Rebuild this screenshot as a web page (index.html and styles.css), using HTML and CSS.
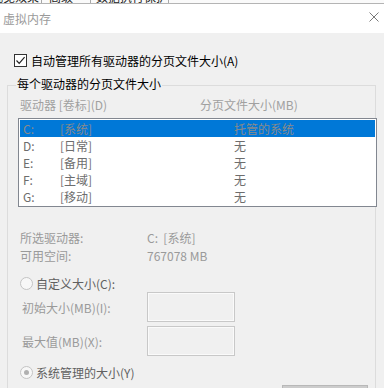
FILE: index.html
```html
<!DOCTYPE html>
<html lang="zh-CN">
<head>
<meta charset="utf-8">
<title>虚拟内存</title>
<link rel="stylesheet" href="styles.css">
</head>
<body>
<div class="strip">
  <div class="tab tab1"><span>视觉效果</span></div>
  <div class="tab tab2"><span>高级</span></div>
  <div class="tab tab3"><span>数据执行保护</span></div>
</div>
<div class="titlebar">
  <span class="title">虚拟内存</span>
  <svg class="close" width="10" height="10" viewBox="0 0 10 10"><path d="M0.5 0.5 L9.5 9.5 M9.5 0.5 L0.5 9.5" stroke="#7a7a7a" stroke-width="1" fill="none"/></svg>
</div>
<div class="content">
  <div class="checkrow">
    <span class="checkbox"><svg width="11" height="11" viewBox="0 0 11 11"><path d="M1.5 5.5 L4.2 8.3 L9.6 2.2" stroke="#222" stroke-width="1.2" fill="none"/></svg></span>
    <span class="label">自动管理所有驱动器的分页文件大小(A)</span>
  </div>
  <div class="group">
    <div class="legend">每个驱动器的分页文件大小</div>
    <div class="colheads">
      <span class="ch1">驱动器 [卷标](D)</span>
      <span class="ch2">分页文件大小(MB)</span>
    </div>
    <div class="list">
      <div class="row sel"><span class="c1">C:</span><span class="c2">[系统]</span><span class="c3">托管的系统</span></div>
      <div class="row"><span class="c1">D:</span><span class="c2">[日常]</span><span class="c3">无</span></div>
      <div class="row"><span class="c1">E:</span><span class="c2">[备用]</span><span class="c3">无</span></div>
      <div class="row"><span class="c1">F:</span><span class="c2">[主域]</span><span class="c3">无</span></div>
      <div class="row"><span class="c1">G:</span><span class="c2">[移动]</span><span class="c3">无</span></div>
    </div>
    <div class="info">
      <div class="irow"><span class="ilabel">所选驱动器:</span><span>C:&nbsp;&nbsp;[系统]</span></div>
      <div class="irow"><span class="ilabel">可用空间:</span><span>767078 MB</span></div>
    </div>
    <div class="radiorow first">
      <span class="radio"></span><span class="rlabel">自定义大小(C):</span>
    </div>
    <div class="boxrow">
      <span class="blabel">初始大小(MB)(I):</span><span class="box"></span>
    </div>
    <div class="boxrow second">
      <span class="blabel">最大值(MB)(X):</span><span class="box"></span>
    </div>
    <div class="radiorow last">
      <span class="radio on"></span><span class="rlabel">系统管理的大小(Y)</span>
    </div>
    <div class="btnrow"><span class="btn"></span></div>
  </div>
</div>
</body>
</html>
```

FILE: styles.css
```css
html, body {
  margin: 0;
  padding: 0;
}
body {
  width: 384px;
  height: 388px;
  overflow: hidden;
  background: #f0f0f0;
  font-family: "Noto Sans CJK SC", "Noto Sans", sans-serif;
  font-size: 12px;
  line-height: 17px;
  color: #000;
}
.strip {
  height: 3px;
  background: #fafafa;
  border-bottom: 1px solid #b4b4b4;
  display: flex;
  overflow: hidden;
}
.tab {
  height: 3px;
  overflow: hidden;
  border-right: 1px solid #a8a8a8;
  box-sizing: content-box;
}
.tab span {
  display: block;
  line-height: 12px;
  margin-top: -9px;
  color: #222;
  white-space: nowrap;
}
.tab1 { width: 41px; }
.tab1 span { margin-left: -9px; }
.tab2 { width: 48px; }
.tab2 span { margin-left: 7px; }
.tab3 { width: 77px; }
.tab3 span { margin-left: 5px; }
.titlebar {
  height: 29px;
  background: #fff;
  display: flex;
  align-items: center;
  justify-content: space-between;
  padding: 0 5px 0 3px;
}
.title {
  color: #9a9a9a;
  line-height: 14px;
}
.close {
  display: block;
  margin-top: -4px;
}
.content {
  padding-top: 19px;
}
.checkrow {
  display: flex;
  align-items: center;
  height: 17px;
  padding-left: 14px;
}
.checkbox {
  width: 11px;
  height: 11px;
  border: 1px solid #333;
  background: #fff;
  display: flex;
}
.checkbox svg { display: block; }
.label {
  margin-left: 4px;
}
.group {
  margin: 16px 0 0 7px;
  width: 367px;
  height: 302px;
  border: 1px solid #dcdcdc;
  border-bottom: none;
}
.legend {
  width: max-content;
  margin: -10px 0 0 8px;
  padding: 0 1px;
  line-height: 16px;
  height: 16px;
  background: #f0f0f0;
}
.colheads {
  display: flex;
  margin-top: 4px;
  padding-left: 12px;
  height: 17px;
  color: #a0a0a0;
}
.ch1 { width: 180px; }
.list {
  margin: 5px 0 0 10px;
  width: 355px;
  border: 1px solid #828790;
  padding: 1px;
  background: #fff;
}
.row {
  display: flex;
  height: 17px;
  color: #6d6d6d;
}
.row.sel {
  background: #0078d7;
  color: #8a8a8a;
}
.c1 { width: 37px; padding-left: 3px; }
.c2 { width: 174px; }
.info {
  margin-top: 22px;
  padding-left: 12px;
  color: #9a9a9a;
}
.irow {
  display: flex;
  height: 18px;
  line-height: 18px;
}
.ilabel { width: 127px; }
.radiorow {
  display: flex;
  align-items: center;
  height: 17px;
  padding-left: 12px;
}
.radiorow.first { margin-top: 10px; }
.radiorow.last { margin-top: 8px; }
.radio {
  width: 11px;
  height: 11px;
  border: 1px solid #c4c4c4;
  border-radius: 50%;
  background: #f7f7f7;
  display: flex;
  align-items: center;
  justify-content: center;
}
.radio.on::after {
  content: "";
  width: 5px;
  height: 5px;
  border-radius: 50%;
  background: #b0b0b0;
}
.rlabel {
  margin-left: 3px;
  color: #606060;
}
.boxrow {
  display: flex;
  align-items: center;
  padding-left: 14px;
}
.boxrow.second { margin-top: 4px; }
.blabel {
  width: 125px;
  color: #9a9a9a;
}
.box {
  width: 86px;
  height: 28px;
  border: 1px solid #c8c8c8;
  box-shadow: inset 0 0 0 1px #fafafa;
  background: #f0f0f0;
}
.btnrow {
  display: flex;
  justify-content: flex-end;
  margin-top: 4px;
  padding-right: 7px;
}
.btn {
  width: 84px;
  height: 3px;
  background: #cccccc;
  border: 1px solid #b8b8b8;
  border-bottom: none;
}
```
